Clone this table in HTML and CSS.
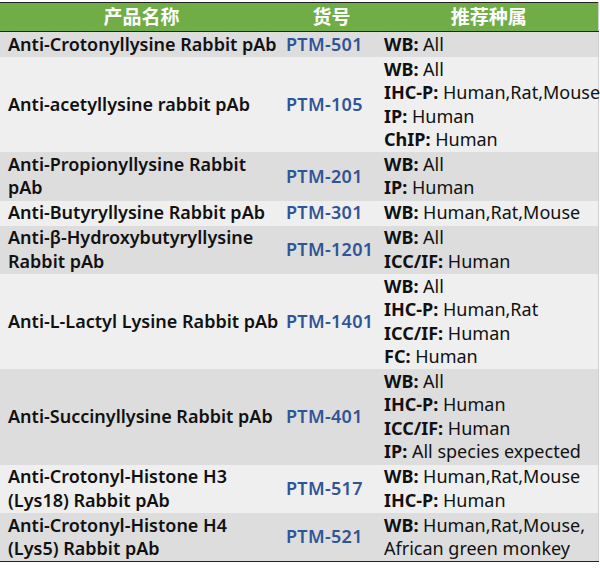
FILE: index.html
```html
<!DOCTYPE html>
<html lang="zh">
<head>
<meta charset="utf-8">
<link rel="stylesheet" href="styles.css">
</head>
<body>
<table class="tbl">
  <colgroup>
    <col class="c-name"><col class="c-cat"><col class="c-spec">
  </colgroup>
  <thead>
    <tr class="head"><th>产品名称</th><th>货号</th><th>推荐种属</th></tr>
  </thead>
  <tbody>
    <tr class="dark"><td class="name">Anti-Crotonyllysine Rabbit pAb</td><td class="cat">PTM-501</td><td class="spec"><b>WB:</b> All</td></tr>
    <tr class="light"><td class="name">Anti-acetyllysine rabbit pAb</td><td class="cat">PTM-105</td><td class="spec"><b>WB:</b> All<br><b>IHC-P:</b> Human,Rat,Mouse<br><b>IP:</b> Human<br><b>ChIP:</b> Human</td></tr>
    <tr class="dark"><td class="name">Anti-Propionyllysine Rabbit<br>pAb</td><td class="cat">PTM-201</td><td class="spec"><b>WB:</b> All<br><b>IP:</b> Human</td></tr>
    <tr class="light"><td class="name">Anti-Butyryllysine Rabbit pAb</td><td class="cat">PTM-301</td><td class="spec"><b>WB:</b> Human,Rat,Mouse</td></tr>
    <tr class="dark"><td class="name">Anti-β-Hydroxybutyryllysine<br>Rabbit pAb</td><td class="cat">PTM-1201</td><td class="spec"><b>WB:</b> All<br><b>ICC/IF:</b> Human</td></tr>
    <tr class="light"><td class="name">Anti-L-Lactyl Lysine Rabbit pAb</td><td class="cat">PTM-1401</td><td class="spec"><b>WB:</b> All<br><b>IHC-P:</b> Human,Rat<br><b>ICC/IF:</b> Human<br><b>FC:</b> Human</td></tr>
    <tr class="dark"><td class="name">Anti-Succinyllysine Rabbit pAb</td><td class="cat">PTM-401</td><td class="spec"><b>WB:</b> All<br><b>IHC-P:</b> Human<br><b>ICC/IF:</b> Human<br><b>IP:</b> All species expected</td></tr>
    <tr class="light"><td class="name">Anti-Crotonyl-Histone H3<br>(Lys18) Rabbit pAb</td><td class="cat">PTM-517</td><td class="spec"><b>WB:</b> Human,Rat,Mouse<br><b>IHC-P:</b> Human</td></tr>
    <tr class="dark"><td class="name">Anti-Crotonyl-Histone H4<br>(Lys5) Rabbit pAb</td><td class="cat">PTM-521</td><td class="spec"><b>WB:</b> Human,Rat,Mouse,<br>African green monkey</td></tr>
  </tbody>
</table>
</body>
</html>
```
FILE: styles.css
```css
html, body {
  margin: 0;
  padding: 0;
  background: #ffffff;
}
body {
  padding-top: 2px;
  font-family: "Noto Sans", "Noto Sans CJK SC", sans-serif;
}
.tbl {
  border-collapse: collapse;
  table-layout: fixed;
  width: 598px;
  border-top: 1.5px solid #222;
  border-bottom: 1.5px solid #222;
  border-right: 1px solid #cfcfcf;
}
.c-name { width: 283px; }
.c-cat { width: 97px; }
.c-spec { width: 218px; }
.head th {
  background: #70ad47;
  color: #fff;
  font-weight: 700;
  font-size: 19px;
  line-height: 28px;
  padding: 0;
  text-align: center;
  border-bottom: 1.5px solid #222;
}
td {
  padding: 0.7px 0;
  font-size: 18px;
  line-height: 23.5px;
  vertical-align: middle;
  color: #111;
}
.dark td { background: #dddddd; }
.light td { background: #efefef; }
.name {
  padding-left: 8px;
  font-weight: 600;
}
.cat {
  padding-left: 3px;
  color: #2f5597;
  font-weight: 600;
  letter-spacing: 0.3px;
}
.spec {
  padding-left: 4px;
  font-weight: 400;
  white-space: nowrap;
}
.spec b { font-weight: 700; }
```
